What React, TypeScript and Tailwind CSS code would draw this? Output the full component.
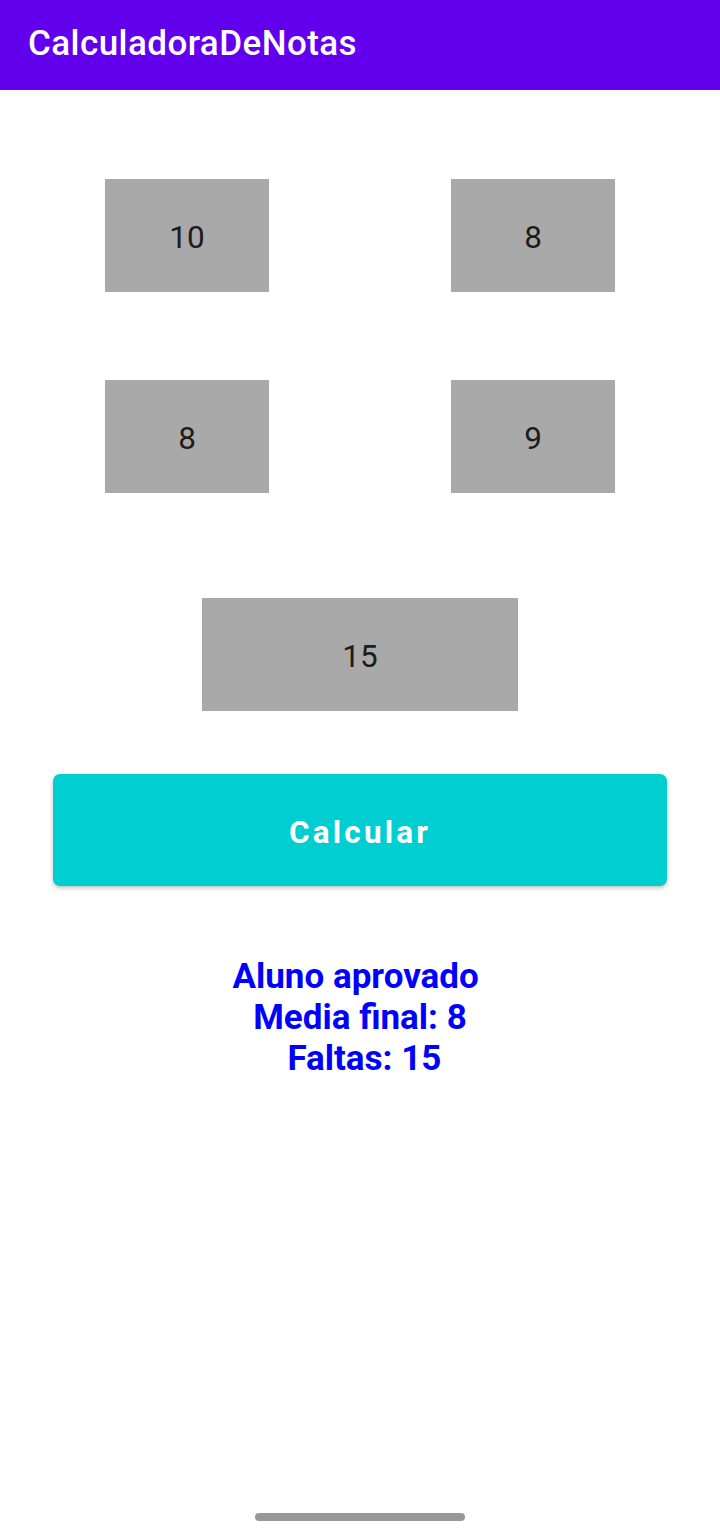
import React from "react";

function Box({ value, wide }: { value: string; wide?: boolean }) {
  return (
    <div
      className={`${wide ? "w-[316px]" : "w-[164px]"} h-[113px] bg-[#a9a9a9] flex items-center justify-center pt-[4px] text-[31.5px] text-[#1c1c1c]`}
    >
      {value}
    </div>
  );
}

export default function App() {
  return (
    <div className="w-[720px] h-[1528px] bg-white flex flex-col relative font-['Roboto',sans-serif]">
      <div className="h-[90px] bg-[#6200ee] flex items-center pl-[28px] shrink-0">
        <span className="text-white text-[35px] font-medium leading-none tracking-[0.0125em] -mt-[4px]">CalculadoraDeNotas</span>
      </div>
      <div className="flex justify-center gap-[182px] mt-[89px]">
        <Box value="10" />
        <Box value="8" />
      </div>
      <div className="flex justify-center gap-[182px] mt-[88px]">
        <Box value="8" />
        <Box value="9" />
      </div>
      <div className="flex justify-center mt-[105px]">
        <Box value="15" wide />
      </div>
      <div className="flex justify-center mt-[63px]">
        <button className="w-[614px] h-[112px] bg-[#00ced1] rounded-[7px] shadow-[0_2px_4px_rgba(0,0,0,0.25)] text-white font-bold text-[31.5px] tracking-[0.1em] pt-[5px]">
          Calcular
        </button>
      </div>
      <div className="mt-[70px] text-center text-[#0000ff] font-bold text-[35px] leading-[41px] whitespace-pre">
        {"Aluno aprovado \nMedia final: 8\n Faltas: 15"}
      </div>
      <div className="absolute left-[255px] top-[1513px] w-[210px] h-[8px] rounded-full bg-[#999999]" />
    </div>
  );
}
